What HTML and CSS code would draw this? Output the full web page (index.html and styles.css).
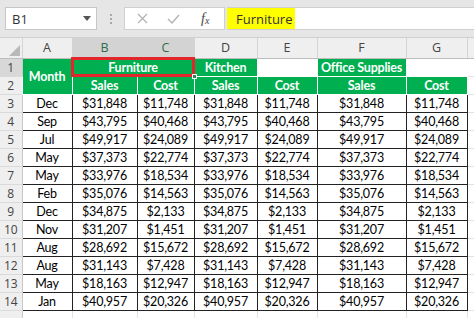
FILE: index.html
```html
<!DOCTYPE html>
<html lang="en">
<head>
    <meta charset="UTF-8">
    <meta name="viewport" content="width=device-width, initial-scale=1.0">
    <title>Sales by Category</title>
    <link rel="stylesheet" href="styles.css">
</head>
<body>
    <div class="formula-bar">
        <div class="name-box">
            <span>B1</span>
            <svg class="caret" width="8" height="5" viewBox="0 0 8 5"><path d="M0 0h8L4 5z" fill="#555"/></svg>
        </div>
        <div class="grip"><i></i><i></i><i></i></div>
        <div class="fx-buttons">
            <svg width="11" height="11" viewBox="0 0 11 11"><path d="M1 1l9 9M10 1l-9 9" stroke="#b3b3b3" stroke-width="1.3" fill="none"/></svg>
            <svg width="13" height="10" viewBox="0 0 13 10"><path d="M1 5l4 4 7-8" stroke="#b3b3b3" stroke-width="1.4" fill="none"/></svg>
            <span class="fx">f<sub>x</sub></span>
        </div>
        <div class="formula-input">
            <span class="highlight">Furniture</span>
        </div>
    </div>

    <table class="grid">
        <colgroup>
            <col style="width:22px"><col style="width:50px"><col style="width:65px"><col style="width:57px">
            <col style="width:63px"><col style="width:60px"><col style="width:89px"><col style="width:61px"><col style="width:7px">
        </colgroup>
        <thead>
            <tr>
                <th class="corner"><svg width="11" height="11" viewBox="0 0 11 11"><path d="M11 0v11H0z" fill="#b9b9b9"/></svg></th>
                <th>A</th>
                <th class="sel">B</th>
                <th class="sel">C</th>
                <th>D</th>
                <th>E</th>
                <th>F</th>
                <th>G</th>
                <th></th>
            </tr>
        </thead>
        <tbody id="rows">
            <tr>
                <th class="sel">1</th>
                <td class="head" rowspan="2">Month</td>
                <td class="head selected" colspan="2">Furniture<span class="handle"></span></td>
                <td class="head">Kitchen</td>
                <td class="blank"></td>
                <td class="head">Office Supplies</td>
                <td class="blank"></td>
                <td class="empty"></td>
            </tr>
            <tr>
                <th>2</th>
                <td class="head">Sales</td>
                <td class="head">Cost</td>
                <td class="head">Sales</td>
                <td class="head">Cost</td>
                <td class="head">Sales</td>
                <td class="head">Cost</td>
                <td class="empty"></td>
            </tr>
        </tbody>
    </table>

    <script>
        const data = [
            ['Dec', '$31,848', '$11,748'],
            ['Sep', '$43,795', '$40,468'],
            ['Jul', '$49,917', '$24,089'],
            ['May', '$37,373', '$22,774'],
            ['May', '$33,976', '$18,534'],
            ['Feb', '$35,076', '$14,563'],
            ['Dec', '$34,875', '$2,133'],
            ['Nov', '$31,207', '$1,451'],
            ['Aug', '$28,692', '$15,672'],
            ['Aug', '$31,143', '$7,428'],
            ['May', '$18,163', '$12,947'],
            ['Jan', '$40,957', '$20,326']
        ];

        const rows = document.getElementById('rows');

        data.forEach((item, i) => {
            const [month, sales, cost] = item;
            const tr = document.createElement('tr');
            tr.innerHTML = `
                <th>${i + 3}</th>
                <td class="cell">${month}</td>
                <td class="cell">${sales}</td>
                <td class="cell">${cost}</td>
                <td class="cell">${sales}</td>
                <td class="cell">${cost}</td>
                <td class="cell">${sales}</td>
                <td class="cell">${cost}</td>
                <td class="empty"></td>
            `;
            rows.appendChild(tr);
        });

        // 下方露出一點的空白列
        const last = document.createElement('tr');
        last.innerHTML = '<th></th>' + '<td class="empty"></td>'.repeat(8);
        rows.appendChild(last);
    </script>
</body>
</html>
```

FILE: styles.css
```css
* {
    box-sizing: border-box;
    margin: 0;
    padding: 0;
}

html, body {
    width: 474px;
    height: 318px;
    overflow: hidden;
}

body {
    font-family: "Open Sans", "Noto Sans", sans-serif;
    background-color: #e6e6e6;
    color: #333;
}

/* 公式列 */
.formula-bar {
    display: flex;
    align-items: stretch;
    height: 38px;
    padding: 7px 0 7px 5px;
    border-bottom: 1px solid #d0d0d0;
}

.name-box {
    width: 92px;
    background: #fff;
    border: 1px solid #c6c6c6;
    display: flex;
    align-items: center;
    justify-content: space-between;
    padding: 0 5px 0 6px;
    font-size: 13px;
    color: #333;
}

.grip {
    width: 27px;
    display: flex;
    flex-direction: column;
    align-items: center;
    justify-content: center;
    gap: 2px;
}

.grip i {
    width: 2px;
    height: 2px;
    background: #a8a8a8;
}

.fx-buttons {
    width: 101px;
    background: #fff;
    border: 1px solid #d0d0d0;
    display: flex;
    align-items: center;
    padding-left: 12px;
    gap: 19px;
}

.fx {
    font-family: "Liberation Serif", serif;
    font-style: italic;
    font-size: 14px;
    color: #444;
    margin-left: 2px;
}

.fx sub {
    font-size: 10px;
    vertical-align: -1px;
}

.formula-input {
    flex: 1;
    margin-left: 2px;
    background: #fff;
    border-top: 1px solid #d0d0d0;
    border-bottom: 1px solid #d0d0d0;
    display: flex;
}

.highlight {
    background: #ffff00;
    padding: 0 0 0 9px;
    width: 68px;
    display: flex;
    align-items: center;
    font-size: 13px;
    color: #333;
}

/* 表格 */
.grid {
    border-collapse: collapse;
    table-layout: fixed;
    width: 474px;
    background: #fff;
    font-family: Lato, "Open Sans", sans-serif;
    font-size: 12.5px;
    letter-spacing: -0.2px;
}

.grid thead th {
    height: 20px;
    background: #efefef;
    border-right: 1px solid #d4d4d4;
    border-bottom: 1px solid #bdbdbd;
    font-family: "Open Sans", sans-serif;
    font-weight: normal;
    font-size: 12.5px;
    color: #444;
    letter-spacing: 0;
}

.grid thead th.sel {
    background: #d3d3d3;
    color: #2f6b48;
}

.grid thead th.corner {
    text-align: right;
    vertical-align: bottom;
    padding: 0 2px 2px 0;
}

.grid thead th.corner svg {
    display: block;
    margin-left: auto;
}

.grid tbody tr {
    height: 18px;
}

.grid tbody th {
    background: #efefef;
    border-right: 1px solid #c8c8c8;
    border-bottom: 1px solid #dadada;
    font-family: "Open Sans", sans-serif;
    font-weight: normal;
    font-size: 12px;
    color: #444;
    letter-spacing: 0;
}

.grid tbody th.sel {
    background: #d8d8d8;
}

.grid td {
    text-align: center;
    white-space: nowrap;
    overflow: hidden;
    color: #000;
}

.grid td.cell {
    border: 1px solid #222;
}

.grid td.head {
    background: #00b050;
    color: #fff;
    font-weight: bold;
    border: 1px solid #fff;
}

.grid td.blank {
    border-left: 1px solid #fff;
    border-right: 1px solid #fff;
}

.grid td.empty {
    border-right: 1px solid #e2e2e2;
    border-bottom: 1px solid #e2e2e2;
}

/* 選取框 */
.grid td.selected {
    position: relative;
    overflow: visible;
    outline: 3px solid #e3262b;
    outline-offset: -2px;
}

.handle {
    position: absolute;
    right: -3px;
    bottom: -3px;
    width: 5px;
    height: 5px;
    background: #3b7d55;
    border: 1px solid #fff;
}
```
